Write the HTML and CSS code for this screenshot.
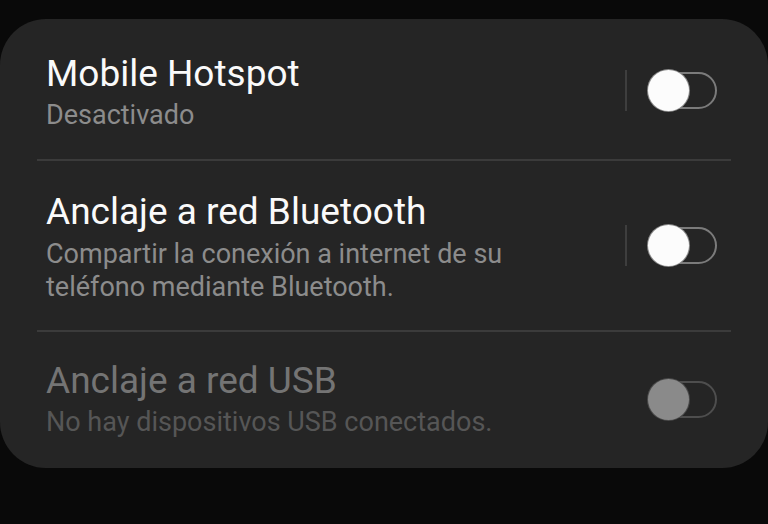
FILE: index.html
```html
<!DOCTYPE html>
<html lang="es">
<head>
    <meta charset="UTF-8">
    <meta name="viewport" content="width=device-width, initial-scale=1.0">
    <title>Anclaje a red</title>
    <link rel="stylesheet" href="styles.css">
</head>
<body>

<div class="card">
    <div class="row">
        <div class="text">
            <div class="title">Mobile Hotspot</div>
            <div class="summary">Desactivado</div>
        </div>
        <div class="control">
            <span class="divider"></span>
            <span class="switch"></span>
        </div>
    </div>

    <div class="row">
        <div class="text">
            <div class="title">Anclaje a red Bluetooth</div>
            <div class="summary">Compartir la conexión a internet de su teléfono mediante Bluetooth.</div>
        </div>
        <div class="control">
            <span class="divider"></span>
            <span class="switch"></span>
        </div>
    </div>

    <div class="row disabled">
        <div class="text">
            <div class="title">Anclaje a red USB</div>
            <div class="summary">No hay dispositivos USB conectados.</div>
        </div>
        <div class="control">
            <span class="switch"></span>
        </div>
    </div>
</div>

</body>
</html>
```

FILE: styles.css
```css
body {
    font-family: Roboto, "Noto Sans", sans-serif;
    margin: 0;
    background-color: #090909;
}

.card {
    margin-top: 19px;
    height: 449px;
    box-sizing: border-box;
    padding: 4px 37px 0;
    background: #252525;
    border-radius: 46px;
}

.row {
    display: flex;
    align-items: center;
    padding: 30px 14px 27px 9px;
    border-bottom: 2px solid #3b3b3b;
}

.row .control {
    margin-bottom: 4px;
}

.row:nth-child(2) {
    padding-bottom: 26px;
}

.row:nth-child(2) .text {
    gap: 5px;
}

.row:last-child {
    padding-top: 28px;
    border-bottom: none;
}

.row:last-child .control {
    margin-bottom: 0;
}

.text {
    flex: 1;
    display: flex;
    flex-direction: column;
    gap: 4px;
}

.title {
    font-size: 37px;
    line-height: 42px;
    color: #fafafa;
}

.summary {
    font-size: 27px;
    line-height: 33px;
    color: #8c8c8c;
    max-width: 520px;
}

.control {
    display: flex;
    align-items: center;
}

.divider {
    width: 2px;
    height: 41px;
    margin-right: 21px;
    background-color: #3e3e3e;
}

.switch {
    position: relative;
    width: 69px;
    height: 37px;
    box-sizing: border-box;
    border: 2px solid #7b7b7b;
    border-radius: 19px;
}

.switch::after {
    content: "";
    position: absolute;
    left: -2px;
    top: -4px;
    width: 41px;
    height: 41px;
    border-radius: 50%;
    background-color: #fcfcfc;
    box-shadow: 0 0 0 1px #8a8a8a;
}

.disabled .title {
    color: #747474;
}

.disabled .summary {
    color: #565656;
}

.disabled .switch {
    border-color: #4e4e4e;
}

.disabled .switch::after {
    background-color: #8a8a8a;
    box-shadow: 0 0 0 1px #4a4a4a;
}
```
